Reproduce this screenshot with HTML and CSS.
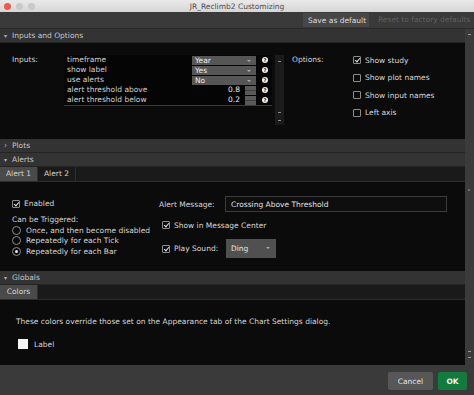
FILE: index.html
```html
<!DOCTYPE html>
<html>
<head>
    <meta charset="UTF-8">
    <title>JR_Reclimb2 Customizing</title>
    <link rel="stylesheet" href="styles.css">
</head>
<body>
<div class="window">
    <div class="titlebar">
        <div class="lights">
            <span class="light red"></span>
            <span class="light"></span>
            <span class="light"></span>
        </div>
        <div class="title">JR_Reclimb2 Customizing</div>
    </div>
    <div class="toolbar">
        <button class="tool-btn">Save as default</button>
        <span class="tool-dim">Reset to factory defaults</span>
    </div>
    <div class="main">
        <div class="content">
            <div class="section-head"><span class="chev">&#9662;</span>Inputs and Options</div>
            <div class="inputs-body">
                <div class="inputs-label">Inputs:</div>
                <div class="input-list">
                    <div class="irow">
                        <span class="iname">timeframe</span>
                        <span class="select">Year<i class="caret"></i></span>
                        <span class="help">?</span>
                    </div>
                    <div class="irow">
                        <span class="iname">show label</span>
                        <span class="select">Yes<i class="caret"></i></span>
                        <span class="help">?</span>
                    </div>
                    <div class="irow">
                        <span class="iname">use alerts</span>
                        <span class="select">No<i class="caret"></i></span>
                        <span class="help">?</span>
                    </div>
                    <div class="irow">
                        <span class="iname">alert threshold above</span>
                        <span class="num">0.8<i class="spin"></i></span>
                        <span class="help">?</span>
                    </div>
                    <div class="irow">
                        <span class="iname">alert threshold below</span>
                        <span class="num">0.2<i class="spin"></i></span>
                        <span class="help">?</span>
                    </div>
                </div>
                <div class="mini-scroll">
                    <i class="dash top"></i>
                    <i class="dash b1"></i>
                    <i class="dash b2"></i>
                </div>
                <div class="options-label">Options:</div>
                <div class="options">
                    <label class="opt"><span class="cb checked"></span>Show study</label>
                    <label class="opt"><span class="cb"></span>Show plot names</label>
                    <label class="opt"><span class="cb"></span>Show input names</label>
                    <label class="opt"><span class="cb"></span>Left axis</label>
                </div>
            </div>

            <div class="section-head closed"><span class="chev">&#8250;</span>Plots</div>
            <div class="section-head"><span class="chev">&#9662;</span>Alerts</div>
            <div class="tabs">
                <span class="tab active">Alert 1</span>
                <span class="tab">Alert 2</span>
            </div>
            <div class="alert-body">
                <div class="alert-left">
                    <label class="check-row enabled"><span class="cb checked"></span>Enabled</label>
                    <div class="trig-label">Can be Triggered:</div>
                    <label class="radio-row"><span class="radio"></span>Once, and then become disabled</label>
                    <label class="radio-row"><span class="radio"></span>Repeatedly for each Tick</label>
                    <label class="radio-row"><span class="radio on"></span>Repeatedly for each Bar</label>
                </div>
                <div class="alert-right">
                    <div class="msg-row">
                        <span class="msg-label">Alert Message:</span>
                        <span class="text-field">Crossing Above Threshold</span>
                    </div>
                    <label class="check-row center"><span class="cb checked"></span>Show in Message Center</label>
                    <div class="sound-row">
                        <label class="check-row sound"><span class="cb checked"></span>Play Sound:</label>
                        <span class="sound-select">Ding<i class="caret"></i></span>
                    </div>
                </div>
            </div>

            <div class="section-head"><span class="chev">&#9662;</span>Globals</div>
            <div class="tabs">
                <span class="tab active">Colors</span>
            </div>
            <div class="globals-body">
                <p class="note">These colors override those set on the Appearance tab of the Chart Settings dialog.</p>
                <div class="swatch-row"><span class="swatch"></span>Label</div>
            </div>
        </div>
        <div class="scrollbar">
            <i class="sarrow up"></i>
            <i class="sdot"></i>
            <i class="sarrow down1"></i>
            <i class="sarrow down2"></i>
        </div>
    </div>
    <div class="footer">
        <button class="btn cancel">Cancel</button>
        <button class="btn ok">OK</button>
    </div>
</div>
</body>
</html>
```

FILE: styles.css
```css
body {
    margin: 0;
    font-family: "DejaVu Sans", sans-serif;
    font-size: 7.5px;
    background-color: #0b0b0b;
    color: #d6d6d6;
}
.window {
    width: 474px;
    height: 395px;
    display: flex;
    flex-direction: column;
    overflow: hidden;
}

/* title bar */
.titlebar {
    height: 12px;
    background: linear-gradient(#e9e9e9, #d6d6d6);
    position: relative;
    display: flex;
    align-items: center;
    justify-content: center;
}
.lights {
    position: absolute;
    left: 4px;
    top: 3px;
    display: flex;
    gap: 5px;
}
.light {
    width: 7px;
    height: 7px;
    border-radius: 50%;
    background-color: #c9c9c9;
}
.light.red {
    background-color: #f0574f;
}
.title {
    color: #4c4c4c;
    font-size: 7.5px;
}

/* toolbar */
.toolbar {
    height: 17px;
    background-color: #3a3a3a;
    border-bottom: 1px solid #2a2a2a;
    box-sizing: border-box;
    display: flex;
    justify-content: flex-end;
    align-items: stretch;
    white-space: nowrap;
}
.tool-btn {
    font-family: inherit;
    font-size: 7.5px;
    color: #dcdcdc;
    background-color: #474747;
    border: none;
    padding: 0 5px;
    margin: 1px 0;
    width: 66px;
}
.tool-dim {
    color: #5e5e5e;
    padding-left: 9px;
    width: 96px;
    overflow: hidden;
    line-height: 16px;
}

/* main */
.main {
    flex: 1;
    display: flex;
    min-height: 0;
}
.content {
    flex: 1;
    display: flex;
    flex-direction: column;
}
.scrollbar {
    width: 9px;
    background-color: #3b3b3b;
    position: relative;
}
.sarrow {
    position: absolute;
    left: 3px;
    width: 3px;
    height: 1px;
    background-color: #9a9a9a;
}
.sarrow.up { top: 5px; }
.sarrow.down1 { top: 322px; }
.sarrow.down2 { top: 328px; }
.sdot {
    position: absolute;
    left: 3px;
    top: 160px;
    width: 2px;
    height: 2px;
    background-color: #6a6a6a;
}

.section-head {
    height: 14px;
    line-height: 14px;
    background-color: #333333;
    border-bottom: 1px solid #242424;
    box-sizing: border-box;
    color: #c6c6c6;
    padding-left: 4px;
}
.chev {
    display: inline-block;
    width: 8px;
    font-size: 6px;
    color: #b0b0b0;
}
.closed .chev {
    font-size: 8px;
}

/* inputs */
.inputs-body {
    height: 96px;
    padding-top: 12px;
    box-sizing: border-box;
    display: flex;
    align-items: flex-start;
}
.inputs-label {
    width: 64px;
    padding-left: 12px;
    line-height: 10px;
    box-sizing: border-box;
}
.input-list {
    width: 208px;
    background-color: #050505;
    border-bottom: 1px solid #3c3c3c;
    padding-left: 3px;
    box-sizing: border-box;
}
.irow {
    height: 10px;
    line-height: 10px;
    display: grid;
    grid-template-columns: 125px 64px 12px;
    align-items: center;
}
.iname {
    color: #d2d2d2;
}
.select {
    height: 9px;
    line-height: 9px;
    background-color: #565656;
    color: #ededed;
    padding-left: 3px;
    position: relative;
}
.caret {
    position: absolute;
    right: 5px;
    top: 4px;
    border-left: 2px solid transparent;
    border-right: 2px solid transparent;
    border-top: 2px solid #a9a9a9;
}
.num {
    display: flex;
    justify-content: flex-end;
    align-items: center;
    color: #ececec;
}
.spin {
    width: 11px;
    height: 9px;
    margin-left: 5px;
    background: linear-gradient(#5a5a5a 45%, #3e3e3e 45%, #3e3e3e 55%, #5a5a5a 55%);
}
.help {
    justify-self: end;
    width: 6px;
    height: 6px;
    border-radius: 50%;
    background-color: #f0f0f0;
    color: #111;
    font-size: 5px;
    font-weight: bold;
    line-height: 6px;
    text-align: center;
}
.mini-scroll {
    width: 9px;
    height: 70px;
    margin-left: 3px;
    background-color: #1b1b1b;
    position: relative;
}
.dash {
    position: absolute;
    left: 3px;
    width: 3px;
    height: 1px;
    background-color: #8a8a8a;
}
.dash.top { top: 6px; }
.dash.b1 { top: 57px; }
.dash.b2 { top: 65px; }
.options-label {
    width: 61px;
    margin-left: 8px;
    line-height: 10px;
}
.options {
    display: flex;
    flex-direction: column;
    gap: 7.5px;
}
.opt {
    display: flex;
    align-items: center;
    height: 10px;
    color: #d8d8d8;
}

/* checkbox */
.cb {
    width: 6px;
    height: 6px;
    border: 1px solid #8c8c8c;
    border-radius: 1px;
    margin-right: 4px;
    position: relative;
    flex: none;
}
.cb.checked::after {
    content: "";
    position: absolute;
    left: 1.5px;
    top: 0;
    width: 2px;
    height: 4px;
    border-right: 1px solid #e6e6e6;
    border-bottom: 1px solid #e6e6e6;
    transform: rotate(40deg);
}

/* tabs */
.tabs {
    height: 15px;
    background-color: #1a1a1a;
    border-bottom: 1px solid #2c2c2c;
    box-sizing: border-box;
    display: flex;
}
.tab {
    width: 38px;
    line-height: 14px;
    text-align: center;
    color: #d6d6d6;
    border-right: 1px solid #2e2e2e;
    box-sizing: border-box;
}
.tab.active {
    background-color: #4a4a4a;
}

/* alerts */
.alert-body {
    height: 89px;
    padding: 14px 0 0 12px;
    box-sizing: border-box;
    display: flex;
}
.alert-left {
    width: 146px;
}
.check-row {
    display: flex;
    align-items: center;
    color: #d8d8d8;
}
.enabled {
    height: 15px;
}
.trig-label {
    margin-top: 4px;
    line-height: 10px;
}
.radio-row {
    display: flex;
    align-items: center;
    height: 10.5px;
}
.radio {
    width: 7px;
    height: 7px;
    border: 1px solid #8c8c8c;
    border-radius: 50%;
    margin-right: 5px;
    position: relative;
    flex: none;
}
.radio.on::after {
    content: "";
    position: absolute;
    left: 2px;
    top: 2px;
    width: 3px;
    height: 3px;
    border-radius: 50%;
    background-color: #e8e8e8;
}
.alert-right {
    display: flex;
    flex-direction: column;
}
.msg-row {
    display: flex;
    align-items: center;
    height: 16px;
}
.msg-label {
    width: 66px;
    padding-left: 1px;
}
.text-field {
    width: 222px;
    height: 16px;
    line-height: 15px;
    border: 1px solid #3a3a3a;
    background-color: #0e0e0e;
    box-sizing: border-box;
    padding-left: 5px;
    color: #e2e2e2;
}
.center {
    margin-top: 8px;
    height: 10px;
    padding-left: 4px;
}
.sound-row {
    margin-top: 9px;
    display: flex;
    align-items: center;
}
.sound {
    width: 68px;
    padding-left: 4px;
    box-sizing: border-box;
}
.sound-select {
    width: 50px;
    height: 19px;
    line-height: 19px;
    background-color: #505050;
    color: #e6e6e6;
    padding-left: 5px;
    box-sizing: border-box;
    position: relative;
}
.sound-select .caret {
    top: 8px;
    right: 6px;
}

/* globals */
.globals-body {
    flex: 1;
    padding: 17px 0 0 16px;
    box-sizing: border-box;
}
.note {
    margin: 0;
    line-height: 10px;
}
.swatch-row {
    margin-top: 12px;
    display: flex;
    align-items: center;
    gap: 6px;
    padding-left: 2px;
}
.swatch {
    width: 10px;
    height: 10px;
    background-color: #f4f4f4;
}

/* footer */
.footer {
    height: 30px;
    background-color: #3a3a3a;
    display: flex;
    justify-content: flex-end;
    align-items: flex-start;
    padding: 7px 7px 0 0;
    box-sizing: border-box;
    gap: 5px;
}
.btn {
    height: 18px;
    border: none;
    border-radius: 2px;
    font-family: inherit;
    font-size: 7.5px;
    color: #e6e6e6;
    cursor: pointer;
}
.cancel {
    width: 45px;
    background-color: #575757;
}
.ok {
    width: 29px;
    background-color: #137a3e;
    font-weight: bold;
    color: #f2f2f2;
}
```
